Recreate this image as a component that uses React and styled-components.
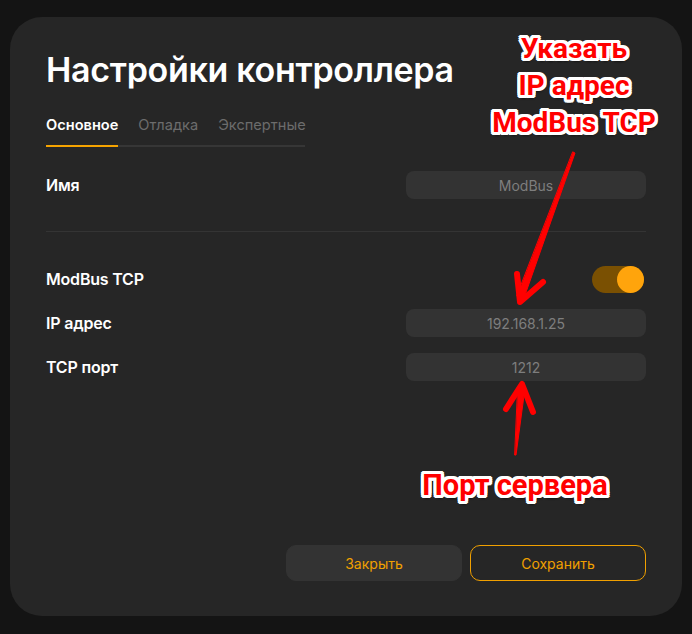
import styled, { createGlobalStyle } from "styled-components";

const Global = createGlobalStyle`
  html, body {
    margin: 0;
    background: #141414;
    font-family: Inter, "Noto Sans", sans-serif;
  }
`;

const Page = styled.div`
  position: relative;
  width: 692px;
  height: 634px;
  padding: 17px 10px 0;
  box-sizing: border-box;
`;

const Card = styled.div`
  width: 672px;
  height: 599px;
  box-sizing: border-box;
  background: #262626;
  border-radius: 32px;
  padding: 31px 36px 35px;
  display: flex;
  flex-direction: column;
`;

const Title = styled.h1`
  margin: 0;
  color: #ffffff;
  font-size: 34px;
  line-height: 44px;
  font-weight: 600;
  letter-spacing: -0.3px;
`;

const Tabs = styled.div`
  display: flex;
  gap: 20px;
  margin-top: 23px;
  width: 259px;
  border-bottom: 2px solid #363636;
`;

const Tab = styled.div`
  font-size: 14.6px;
  line-height: 20px;
  font-weight: ${(p) => (p.$active ? 600 : 400)};
  color: ${(p) => (p.$active ? "#ffffff" : "#6c6c6c")};
  padding-bottom: 10px;
  margin-bottom: -2px;
  border-bottom: 2px solid ${(p) => (p.$active ? "#f5a300" : "transparent")};
`;

const Row = styled.div`
  display: flex;
  align-items: center;
  justify-content: space-between;
  height: 28px;
  margin-top: ${(p) => p.$top || 16}px;
`;

const Label = styled.div`
  color: #ffffff;
  font-size: 16px;
  font-weight: 600;
  letter-spacing: -0.2px;
`;

const Field = styled.div`
  width: 240px;
  height: 28px;
  border-radius: 8px;
  background: #333333;
  color: #7e7e7e;
  font-size: 14px;
  display: flex;
  align-items: center;
  justify-content: center;
`;

const Divider = styled.div`
  height: 1px;
  background: #343434;
  margin-top: 32px;
`;

const Toggle = styled.div`
  position: relative;
  width: 52px;
  height: 27px;
  margin-right: 2px;
  border-radius: 14px;
  background: #7a5002;
`;

const Knob = styled.div`
  position: absolute;
  right: 0;
  top: 0;
  width: 27px;
  height: 27px;
  border-radius: 50%;
  background: #ffa40c;
`;

const Footer = styled.div`
  margin-top: auto;
  display: flex;
  justify-content: flex-end;
  gap: 8px;
`;

const Button = styled.button`
  width: 176px;
  height: 36px;
  border-radius: 10px;
  font-family: inherit;
  font-size: 14px;
  color: #f0a000;
  background: ${(p) => (p.$outline ? "transparent" : "#333333")};
  border: 1px solid ${(p) => (p.$outline ? "#f0a000" : "#333333")};
`;

const Note = styled.div`
  position: absolute;
  left: ${(p) => p.$x}px;
  top: ${(p) => p.$y}px;
  transform: translateX(-50%);
  text-align: center;
  white-space: nowrap;
  font-family: Roboto, "Liberation Sans", sans-serif;
  font-weight: 700;
  font-size: ${(p) => p.$size || 28}px;
  line-height: 37px;
  color: #ff0000;
  text-shadow:
    3px 0 0 #fff, -3px 0 0 #fff, 0 3px 0 #fff, 0 -3px 0 #fff,
    2px 2px 0 #fff, -2px 2px 0 #fff, 2px -2px 0 #fff, -2px -2px 0 #fff,
    3px 2px 0 #fff, -3px 2px 0 #fff, 3px -2px 0 #fff, -3px -2px 0 #fff,
    2px 3px 0 #fff, -2px 3px 0 #fff, 2px -3px 0 #fff, -2px -3px 0 #fff,
    1px 4px 2px rgba(0,0,0,0.5);
`;

const Overlay = styled.svg`
  position: absolute;
  left: 0;
  top: 0;
  pointer-events: none;
`;

function Arrows() {
  return (
    <Overlay width="692" height="634" viewBox="0 0 692 634">
      <g fill="#ff0000" stroke="#ff0000" strokeLinecap="round" strokeLinejoin="round">
        <polygon points="573,152 575,153 524,298 517,296" strokeWidth="1" />
        <polyline points="517,274 520,302 543,282" fill="none" strokeWidth="6" />
        <polygon points="515,455 516,455 525,388 518,387" strokeWidth="1" />
        <polyline points="506,409 522,384 533,412" fill="none" strokeWidth="6" />
      </g>
    </Overlay>
  );
}

export default function App() {
  return (
    <Page>
      <Global />
      <Card>
        <Title>Настройки контроллера</Title>
        <Tabs>
          <Tab $active>Основное</Tab>
          <Tab>Отладка</Tab>
          <Tab>Экспертные</Tab>
        </Tabs>
        <Row $top={24}>
          <Label>Имя</Label>
          <Field>ModBus</Field>
        </Row>
        <Divider />
        <Row $top={33}>
          <Label>ModBus TCP</Label>
          <Toggle>
            <Knob />
          </Toggle>
        </Row>
        <Row>
          <Label>IP адрес</Label>
          <Field>192.168.1.25</Field>
        </Row>
        <Row>
          <Label>TCP порт</Label>
          <Field>1212</Field>
        </Row>
        <Footer>
          <Button>Закрыть</Button>
          <Button $outline>Сохранить</Button>
        </Footer>
      </Card>
      <Arrows />
      <Note $x={574} $y={30}>
        Указать
        <br />
        IP адрес
        <br />
        ModBus TCP
      </Note>
      <Note $x={515} $y={467} $size={29}>Порт сервера</Note>
    </Page>
  );
}
